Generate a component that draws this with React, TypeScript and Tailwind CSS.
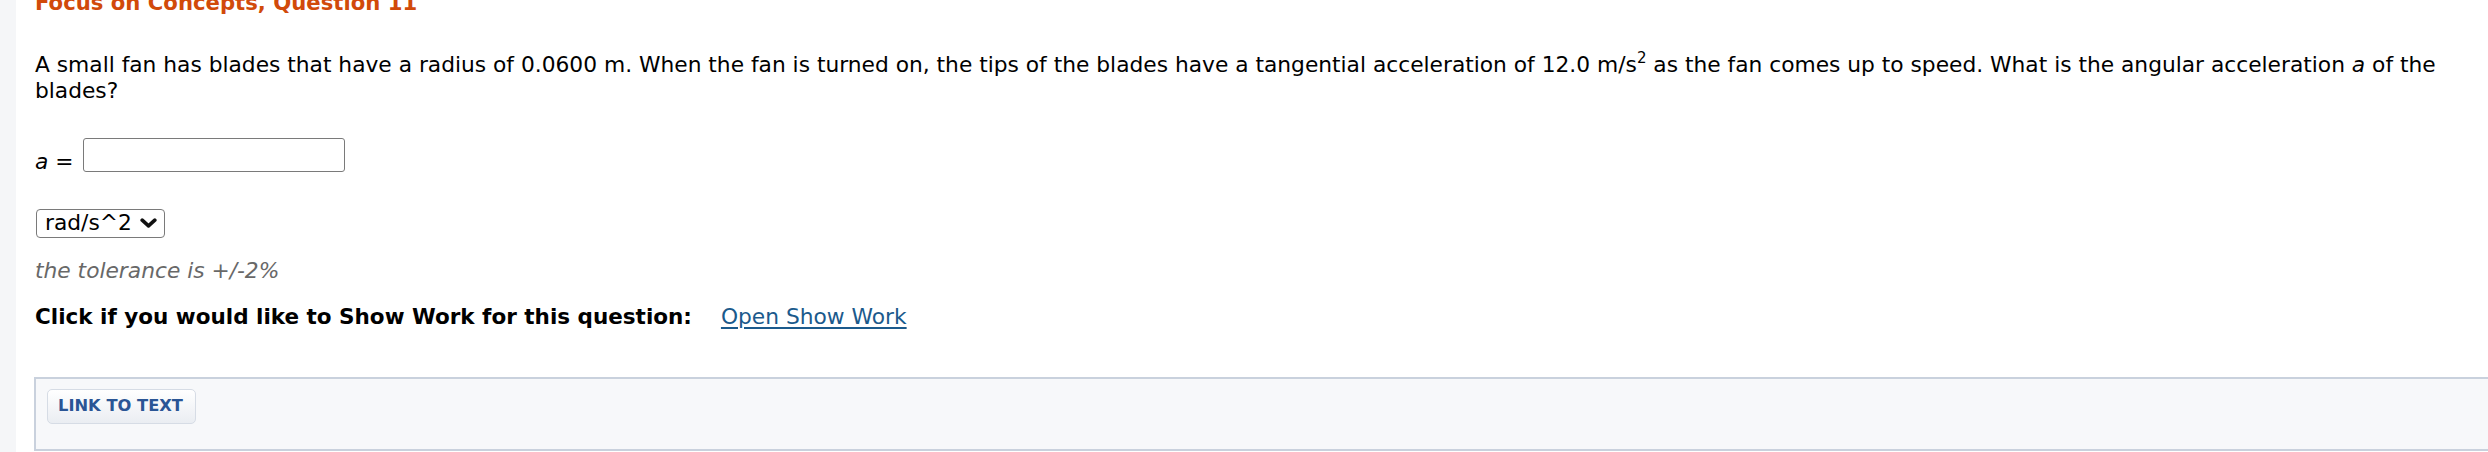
const FONT = "font-['DejaVu_Sans','Verdana',sans-serif]";

function ChevronDown() {
  return (
    <svg width="17" height="10" viewBox="0 0 17 10" className="shrink-0">
      <path d="M2.2 2.2 L8.5 7.8 L14.8 2.2" fill="none" stroke="#111" strokeWidth="3.6" strokeLinecap="round" strokeLinejoin="round" />
    </svg>
  );
}

export default function App() {
  return (
    <div className={`flex h-[452px] w-[2488px] overflow-hidden bg-white text-black ${FONT}`}>
      <div className="w-[16px] shrink-0 bg-[#f5f6f8]" />
      <div className="flex min-w-0 flex-1 flex-col pl-[18px]">
        <h2 className="mt-[-10px] pl-[1px] text-[21.2px] font-bold leading-[26px] text-[#d14a0a]">
          Focus on Concepts, Question 11
        </h2>

        <p className="mt-[36px] pl-[1px] text-[21.75px] leading-[26px]">
          A small fan has blades that have a radius of 0.0600 m. When the fan is turned on, the tips of the blades have a
          tangential acceleration of 12.0 m/s<sup className="relative top-[-1px] text-[15px] leading-none align-super">2</sup> as the fan comes up
          to speed. What is the angular acceleration <i>a</i> of the blades?
        </p>

        <div className="mt-[33.5px] flex h-[34px] items-start pl-[1px]">
          <span className="mt-[11.5px] text-[21.75px] leading-[26px]">
            <i>a</i> =
          </span>
          <div className="ml-[10px] h-[34px] w-[262px] rounded-[3px] border-[1.5px] border-[#7a7a7a] bg-white" />
        </div>

        <div className="mt-[37px] flex">
          <div className="ml-[2px] flex h-[29px] w-[129px] items-center gap-[8px] rounded-[4px] border-[1.5px] border-[#7a7a7a] bg-white pl-[8px] text-[21.75px] leading-none">
            <span>rad/s^2</span>
            <ChevronDown />
          </div>
        </div>

        <p className="mt-[20.5px] pl-[1px] text-[21.75px] italic leading-[26px] text-[#686868]">the tolerance is +/-2%</p>

        <div className="mt-[20px] flex items-baseline pl-[1px] leading-[26px]">
          <span className="text-[21.5px] font-bold">Click if you would like to Show Work for this question:</span>
          <a href="#" className="ml-[29px] text-[21.75px] text-[#1b5a8c] underline underline-offset-[3px]">
            Open Show Work
          </a>
        </div>

        <div className="mt-[46.5px] mr-[-6px] h-[74px] border-2 border-[#c9d1dd] bg-[#f7f8fa] pl-[11px] pt-[10px]">
          <button
            type="button"
            className="flex h-[35px] w-[149px] items-center justify-center rounded-[5px] border border-[#d6dce5] bg-gradient-to-b from-white to-[#eaedf2] pr-[2px] text-[16.3px] font-bold text-[#2a5595]"
          >
            LINK TO TEXT
          </button>
        </div>
      </div>
    </div>
  );
}
